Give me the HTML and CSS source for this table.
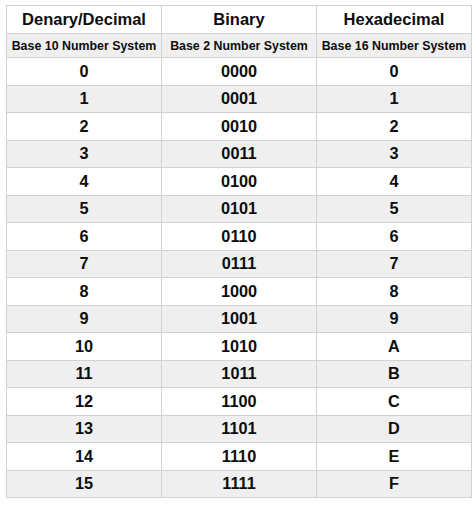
FILE: index.html
```html
<!DOCTYPE html>
<html>
<head>
<meta charset="utf-8">
<link rel="stylesheet" href="styles.css">
</head>
<body>
<table class="conv">
<thead>
<tr class="head"><th>Denary/Decimal</th><th>Binary</th><th>Hexadecimal</th></tr>
<tr class="sub"><th>Base 10 Number System</th><th>Base 2 Number System</th><th>Base 16 Number System</th></tr>
</thead>
<tbody>
<tr><td>0</td><td>0000</td><td>0</td></tr>
<tr><td>1</td><td>0001</td><td>1</td></tr>
<tr><td>2</td><td>0010</td><td>2</td></tr>
<tr><td>3</td><td>0011</td><td>3</td></tr>
<tr><td>4</td><td>0100</td><td>4</td></tr>
<tr><td>5</td><td>0101</td><td>5</td></tr>
<tr><td>6</td><td>0110</td><td>6</td></tr>
<tr><td>7</td><td>0111</td><td>7</td></tr>
<tr><td>8</td><td>1000</td><td>8</td></tr>
<tr><td>9</td><td>1001</td><td>9</td></tr>
<tr><td>10</td><td>1010</td><td>A</td></tr>
<tr><td>11</td><td>1011</td><td>B</td></tr>
<tr><td>12</td><td>1100</td><td>C</td></tr>
<tr><td>13</td><td>1101</td><td>D</td></tr>
<tr><td>14</td><td>1110</td><td>E</td></tr>
<tr><td>15</td><td>1111</td><td>F</td></tr>
</tbody>
</table>
</body>
</html>
```
FILE: styles.css
```css
html, body {
  margin: 0;
  padding: 0;
  background: #fff;
}
body {
  padding: 5px 0 0 6px;
  font-family: "Liberation Sans", Arial, sans-serif;
  color: #0d0d0d;
}
.conv {
  border-collapse: collapse;
  table-layout: fixed;
  width: 463px;
}
.conv th, .conv td {
  border: 1px solid #d2d2d2;
  text-align: center;
  padding: 0;
  font-weight: bold;
  width: 154px;
}
.head th {
  height: 27px;
  font-size: 16.5px;
  background: #fff;
}
.sub th {
  height: 23px;
  font-size: 12.4px;
  background: #efefef;
}
.conv td {
  height: 26.5px;
  font-size: 16.3px;
}
.conv tbody tr:nth-child(even) td {
  background: #efefef;
}
```
